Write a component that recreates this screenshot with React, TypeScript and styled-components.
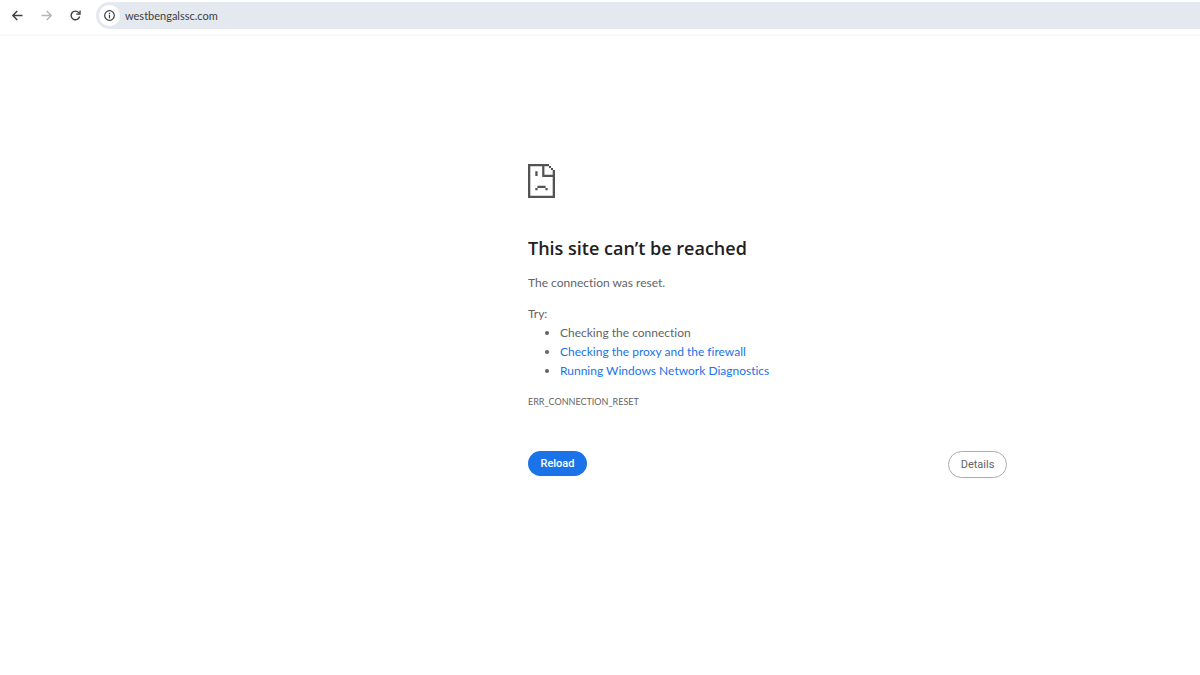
import React from "react";
import styled, { createGlobalStyle } from "styled-components";

const GlobalStyle = createGlobalStyle`
  *, *::before, *::after { box-sizing: border-box; }
  body {
    margin: 0;
    background: #fff;
    color: #5f6368;
    font-family: Lato, "Open Sans", sans-serif;
    font-size: 12px;
    font-variant-ligatures: none;
  }
`;

const Toolbar = styled.header`
  display: flex;
  align-items: center;
  gap: 12px;
  height: 36px;
  padding: 0 0 4px 9px;
  border-bottom: 2px solid #f6f7f9;
`;

const NavButton = styled.button`
  display: grid;
  place-items: center;
  width: 17px;
  height: 20px;
  padding: 0;
  border: 0;
  background: none;
  color: #3c4043;

  &:disabled { color: #b4b6b9; }
`;

const AddressBar = styled.div`
  display: flex;
  flex: 1;
  align-items: center;
  gap: 5px;
  height: 27px;
  padding-left: 3px;
  border-radius: 14px 0 0 14px;
  background: #e4e8ef;
`;

const SiteInfo = styled.button`
  display: grid;
  place-items: center;
  width: 21px;
  height: 21px;
  padding: 0;
  border: 0;
  border-radius: 50%;
  background: #fff;
  color: #3c4043;
`;

const AddressInput = styled.input`
  flex: 1;
  min-width: 0;
  height: 20px;
  padding: 0;
  border: 0;
  outline: 0;
  background: none;
  color: #3c4043;
  font: 11px Lato, "Open Sans", sans-serif;
`;

const Page = styled.main`
  display: grid;
  grid-template-columns: 528fr minmax(0, 479px) 193fr;
  padding: 128px 0 48px;
`;

const ErrorPanel = styled.section`
  grid-column: 2;
`;

const Title = styled.h1`
  margin: 36px 0 0;
  color: #202124;
  font-family: "Open Sans", "Noto Sans", sans-serif;
  font-size: 18px;
  font-weight: 600;
  line-height: 28px;
`;

const Text = styled.p`
  margin: 12px 0 0;
  line-height: 19px;
`;

const Lead = styled(Text)`
  margin-top: 11px;
`;

const Suggestions = styled.ul`
  margin: 0;
  padding-left: 32px;
  line-height: 19px;
`;

const Link = styled.a`
  color: #1a73e8;
  text-decoration: none;
`;

const ErrorCode = styled.p`
  margin: 12px 0 0;
  font-size: 9px;
  line-height: 19px;
`;

const Actions = styled.div`
  display: flex;
  justify-content: space-between;
  align-items: flex-start;
  margin-top: 40px;
`;

const PillButton = styled.button<{ $primary?: boolean }>`
  width: 59px;
  height: ${(p) => (p.$primary ? 25 : 27)}px;
  padding: 0;
  border: ${(p) => (p.$primary ? "0" : "1px solid #a9acb0")};
  border-radius: 14px;
  background: ${(p) => (p.$primary ? "#1a73e8" : "#fff")};
  color: ${(p) => (p.$primary ? "#fff" : "#5f6368")};
  font: ${(p) => (p.$primary ? 500 : 400)} 11px Roboto, sans-serif;
`;

const SadPage = () => (
  <svg width="27" height="34" viewBox="0 0 27 34" fill="#535353" display="block" aria-hidden="true">
    <path d="M0 0H21V2H23V4H25V6H27V34H0ZM2.3 2.3V31.7H24.7V13H14.2V2.3ZM16.4 2.3V10.8H24.7V6H23V4H21V2.3Z" fillRule="evenodd" />
    <path d="M7.3 7.3H9.6V12H7.3ZM9.4 21.7H17.6V24H9.4ZM7.3 24H9.6V26.2H7.3ZM17.4 24H19.7V26.2H17.4Z" />
  </svg>
);

const Arrow = ({ forward }: { forward?: boolean }) => (
  <svg width="11" height="11" viewBox="0 0 11 11" fill="none" stroke="currentColor" strokeWidth="1.4" aria-hidden="true">
    <path d={forward ? "M0.5 5.5H10M5.7 1L10.2 5.5L5.7 10" : "M10.5 5.5H1M5.3 1L0.8 5.5L5.3 10"} />
  </svg>
);

const ReloadIcon = () => (
  <svg width="11" height="11" viewBox="0 0 11 11" aria-hidden="true">
    <path d="M9.6 6.5A4.3 4.3 0 1 1 8.7 2.6L9.6 3.5" fill="none" stroke="currentColor" strokeWidth="1.4" />
    <path d="M10.7 0.4V4.8H6.3V3.5H9.4V0.4Z" fill="currentColor" />
  </svg>
);

const InfoIcon = () => (
  <svg width="11" height="11" viewBox="0 0 11 11" aria-hidden="true">
    <circle cx="5.5" cy="5.5" r="4.8" fill="none" stroke="currentColor" strokeWidth="1.2" />
    <path d="M4.9 4.8H6.1V8.2H4.9ZM4.9 2.7H6.1V3.9H4.9Z" fill="currentColor" />
  </svg>
);

export default function App() {
  return (
    <>
      <GlobalStyle />
      <Toolbar>
        <NavButton aria-label="Back"><Arrow /></NavButton>
        <NavButton aria-label="Forward" disabled><Arrow forward /></NavButton>
        <NavButton aria-label="Reload page"><ReloadIcon /></NavButton>
        <AddressBar>
          <SiteInfo aria-label="View site information"><InfoIcon /></SiteInfo>
          <AddressInput aria-label="Address" defaultValue="westbengalssc.com" spellCheck={false} />
        </AddressBar>
      </Toolbar>
      <Page>
        <ErrorPanel>
          <SadPage />
          <Title>This site can’t be reached</Title>
          <Lead>The connection was reset.</Lead>
          <Text>Try:</Text>
          <Suggestions>
            <li>Checking the connection</li>
            <li><Link href="#proxy">Checking the proxy and the firewall</Link></li>
            <li><Link href="#diagnostics">Running Windows Network Diagnostics</Link></li>
          </Suggestions>
          <ErrorCode>ERR_CONNECTION_RESET</ErrorCode>
          <Actions>
            <PillButton $primary>Reload</PillButton>
            <PillButton>Details</PillButton>
          </Actions>
        </ErrorPanel>
      </Page>
    </>
  );
}
